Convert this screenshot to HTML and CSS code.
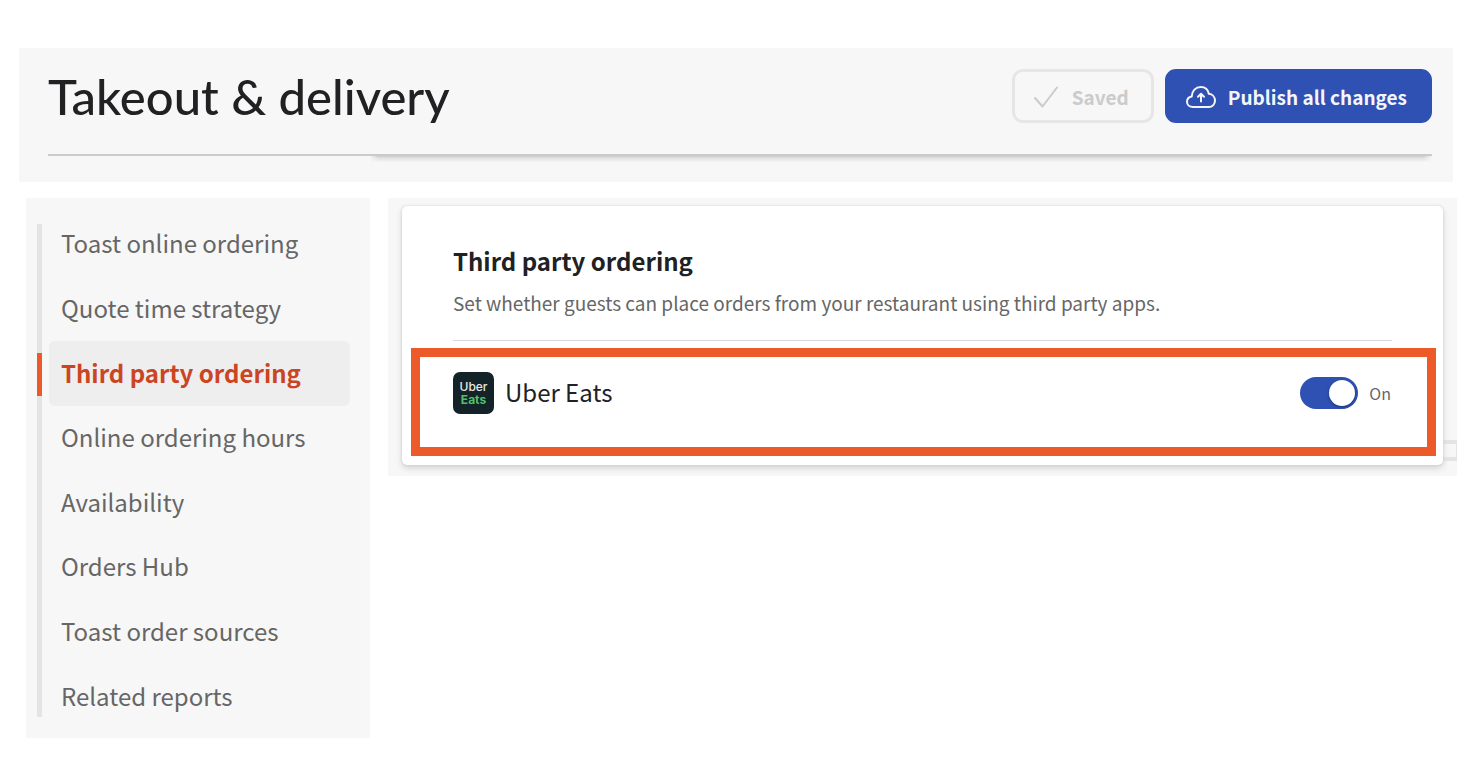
FILE: index.html
```html
<!DOCTYPE html>
<html lang="en">
<head>
<meta charset="utf-8">
<meta name="viewport" content="width=device-width, initial-scale=1">
<title>Takeout &amp; delivery</title>
<link rel="stylesheet" href="styles.css">
</head>
<body>
<header class="header">
  <div class="header-bar">
    <h1 class="title">Takeout &amp; delivery</h1>
    <div class="actions">
      <button class="btn btn-saved" type="button" disabled>
        <svg class="icon-check" viewBox="0 0 26 24" aria-hidden="true"><path d="M2 13 9.500 21.500 24 2.500"/></svg>
        Saved
      </button>
      <button class="btn btn-publish" type="button">
        <svg class="icon-cloud" viewBox="0 0 30 24" aria-hidden="true"><path d="M7 22C3.500 22 1 19.700 1 16.700c0-2.600 1.700-4.600 4.700-5.200C5.900 5.700 9.700 2 14.800 2c4.400 0 7.300 2.900 8 6.800 3.800.4 6.200 3.400 6.200 6.700 0 3.700-2.600 6.500-6 6.500Z"/><path d="M15 16.500V9M12 11.700 15 8.700 18 11.700"/></svg>
        Publish all changes
      </button>
    </div>
  </div>
</header>
<div class="layout">
  <nav class="sidebar" aria-label="Takeout and delivery settings">
    <div class="nav-list">
      <a class="nav-item" href="#toast">Toast online ordering</a>
      <a class="nav-item" href="#quote">Quote time strategy</a>
      <a class="nav-item nav-item-active" href="#third-party" aria-current="page">Third party ordering</a>
      <a class="nav-item" href="#hours">Online ordering hours</a>
      <a class="nav-item" href="#availability">Availability</a>
      <a class="nav-item" href="#hub">Orders Hub</a>
      <a class="nav-item" href="#sources">Toast order sources</a>
      <a class="nav-item" href="#reports">Related reports</a>
    </div>
  </nav>
  <main class="panel">
    <div class="ghost" aria-hidden="true"></div>
    <section class="card" id="third-party">
      <div class="card-head">
        <h2 class="card-title">Third party ordering</h2>
        <p class="card-text">Set whether guests can place orders from your restaurant using third party apps.</p>
      </div>
      <div class="highlight">
        <div class="partner">
          <div class="logo" aria-hidden="true"><span>Uber</span><span class="logo-eats">Eats</span></div>
          <label class="partner-name" for="uber">Uber Eats</label>
        </div>
        <div class="toggle">
          <input class="switch" type="checkbox" role="switch" id="uber" checked>
          <span class="state">On</span>
        </div>
      </div>
    </section>
  </main>
</div>
</body>
</html>
```
FILE: styles.css
```css
* {
  box-sizing: border-box;
}

body {
  margin: 0;
  padding: 48px 25px 24px 19px;
  background: #fff;
  color: #212123;
  font-family: "Noto Sans CJK SC", "Open Sans", sans-serif;
}

h1, h2, p {
  margin: 0;
}

.header {
  margin-right: 4px;
  padding: 0 21px 26px 29px;
  background: #f7f7f7;
}

.header-bar {
  position: relative;
  display: flex;
  align-items: center;
  justify-content: space-between;
  height: 108px;
  padding-bottom: 10px;
  border-bottom: 2px solid #cbcbcb;
}

/* soft shadow under the part of the rule that spans the content column */
.header-bar::after {
  content: "";
  position: absolute;
  top: 107px;
  left: 322px;
  right: 0;
  height: 10px;
  background: linear-gradient(#c4c4c4, #e4e4e4 35%, #f7f7f7 75%);
  mask-image: linear-gradient(to right, transparent, #000 8px calc(100% - 8px), transparent);
}

.title {
  font-family: Lato, sans-serif;
  font-size: 49px;
  font-weight: 500;
  line-height: 56px;
}

.actions {
  display: flex;
  gap: 11px;
}

.btn {
  display: flex;
  align-items: center;
  height: 54px;
  border: 3px solid #e6e6e6;
  border-radius: 11px;
  font: 700 19px/28px "Noto Sans CJK SC", sans-serif;
}

.btn svg {
  fill: none;
  stroke: currentColor;
  stroke-width: 2;
  stroke-linecap: round;
  stroke-linejoin: round;
}

.btn-saved {
  gap: 13px;
  padding: 2px 22px 0 18px;
  background: #f7f7f7;
  color: #cbcbcb;
}

.btn-publish {
  gap: 12px;
  padding: 2px 22px 0 18px;
  border-color: #2f51b3;
  background: #2f51b3;
  color: #f4f6fc;
}

.icon-check {
  width: 26px;
  height: 24px;
}

.icon-cloud {
  width: 30px;
  height: 24px;
}

.layout {
  display: flex;
  align-items: flex-start;
  gap: 18px;
  margin-top: 16px;
  padding-left: 7px;
}

.sidebar {
  flex: 0 0 344px;
  padding: 14px 20px 9px 11px;
  background: #f7f7f7;
}

.nav-list {
  position: relative;
  display: grid;
  grid-auto-rows: 1fr;
  min-height: 517px;
  padding-left: 12px;
}

.nav-list::before {
  content: "";
  position: absolute;
  top: 12px;
  bottom: 12px;
  left: 0;
  width: 5px;
  background: #e4e4e4;
}

.nav-item {
  position: relative;
  display: flex;
  align-items: center;
  padding: 0 0 2px 12px;
  border-radius: 6px;
  color: #666;
  font-size: 24px;
  line-height: 32px;
  text-decoration: none;
}

.nav-item-active {
  background: #eee;
  color: #cc4523;
  font-weight: 700;
}

.nav-item-active::before {
  content: "";
  position: absolute;
  top: 12px;
  bottom: 10px;
  left: -12px;
  width: 5px;
  background: #ec5a29;
}

.panel {
  position: relative;
  flex: 1;
  padding: 8px 14px 11px;
  overflow: hidden;
  background: #f7f7f7;
}

.ghost {
  position: absolute;
  right: 0;
  bottom: 15px;
  width: 24px;
  height: 21px;
  border: 4px solid #e4e4e4;
  border-right-width: 1px;
  background: #f7f7f7;
}

.card {
  position: relative;
  padding: 0 7px 9px 9px;
  border-radius: 5px;
  background: #fff;
  box-shadow: 0 0 2px #ccc, 0 3px 6px #d0d0d0;
}

.card-head {
  margin: 0 44px 7px 42px;
  padding: 38px 0 22px;
  border-bottom: 1px solid #d8d8d8;
}

.card-title {
  font-size: 24px;
  line-height: 34px;
}

.card-text {
  margin-top: 10px;
  color: #666;
  font-size: 19px;
  line-height: 30px;
}

.highlight {
  display: flex;
  justify-content: space-between;
  padding: 15px 36px 33px 33px;
  border: 9px solid #ec5a29;
}

.partner,
.toggle {
  display: flex;
  align-items: center;
}

.partner {
  gap: 11px;
}

.toggle {
  gap: 11px;
}

.logo {
  display: flex;
  flex-direction: column;
  align-items: center;
  justify-content: center;
  width: 41px;
  height: 42px;
  border-radius: 7px;
  background: #142328;
  color: #e9e9e6;
  font: 500 12px/13px Inter, sans-serif;
}

.logo-eats {
  color: #4fbf6b;
  font-weight: 700;
}

.partner-name {
  padding-bottom: 2px;
  font-size: 24px;
  line-height: 34px;
}

.switch {
  appearance: none;
  display: flex;
  align-items: center;
  width: 58px;
  height: 32px;
  margin: 0;
  padding: 3px;
  border-radius: 16px;
  background: #bbb;
}

.switch::before {
  content: "";
  width: 26px;
  height: 26px;
  border-radius: 50%;
  background: #fff;
  box-shadow: 0 1px 3px #1c3278;
}

.switch:checked {
  justify-content: flex-end;
  background: #2f51b3;
}

.state {
  color: #666;
  font-size: 16px;
  line-height: 24px;
}
```
